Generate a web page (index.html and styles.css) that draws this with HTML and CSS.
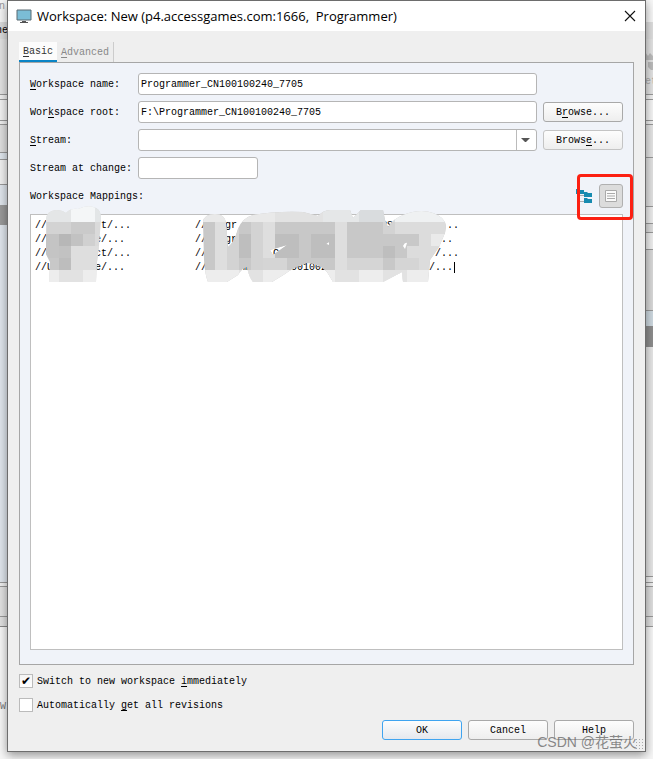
FILE: index.html
```
<!DOCTYPE html>
<html lang="en">
<head>
<meta charset="utf-8">
<title>Workspace: New</title>
<link rel="stylesheet" href="styles.css">
</head>
<body>
<div class="desktop">
  <div class="behind" aria-hidden="true">
    <div class="strip strip-left"><span class="peek peek-title">n:</span><span class="peek peek-menu">ne</span><span class="peek peek-log">W</span></div>
    <div class="strip strip-right">
      <svg class="peek-tool" width="8" height="20" viewBox="0 0 8 20"><path d="M0 0l3 4 2-3 3 3v4H0zM3 10h5v8H6l-3-3z" fill="#bbb"/></svg>
      <span class="peek peek-get">et</span>
    </div>
  </div>

  <main class="window">
    <header class="titlebar">
      <svg class="monitor" width="16" height="15" viewBox="0 0 16 15"><path d="M1 1h14v10H1z" fill="#7bbdd6" stroke="#5b6a72"/><path d="M6 12h4v1h2v1H4v-1h2z" fill="#555"/></svg>
      <h1>Workspace: New (p4.accessgames.com:1666,&nbsp; Programmer)</h1>
      <button class="close" type="button" aria-label="Close"><svg width="12" height="12" viewBox="0 0 12 12"><path d="M1 1l10 10M11 1L1 11" stroke="#111" stroke-width="1.1" fill="none"/></svg></button>
    </header>

    <form class="content">
      <nav class="tabs">
        <button class="tab active" type="button"><u>B</u>asic</button>
        <button class="tab" type="button"><u>A</u>dvanced</button>
      </nav>

      <section class="panel">
        <div class="fields">
          <label for="name"><u>W</u>orkspace name:</label>
          <input id="name" class="box" type="text" value="Programmer_CN100100240_7705">
          <span></span>
          <label for="root">Wor<u>k</u>space root:</label>
          <input id="root" class="box" type="text" value="F:\Programmer_CN100100240_7705">
          <button class="btn" type="button">B<u>r</u>owse...</button>
          <label for="stream"><u>S</u>tream:</label>
          <div class="combo">
            <select id="stream" class="box"><option></option></select>
            <svg class="arrow" width="20" height="20" viewBox="0 0 20 20"><path d="M.5 0v20" stroke="#bbb"/><path d="M5 8h9l-4 4H9z" fill="#555"/></svg>
          </div>
          <button class="btn light" type="button">Brows<u>e</u>...</button>
          <label for="change">Stream at change:</label>
          <input id="change" class="box short" type="text">
        </div>

        <div class="mapping-head">
          <label for="mappings">Workspace Mappings:</label>
          <div class="views">
            <button class="view" type="button" aria-label="Tree view"><svg width="16" height="16" viewBox="0 0 16 16"><path d="M3.500 5v8.500h5M3.500 7.500h5" fill="none" stroke="#a8adb0"/><path d="M0 1h3l1 1h4v4H0zM8 4h3l1 1h4v4H8zM8 10h3l1 1h4v4H8z" fill="#178bb0"/></svg></button>
            <button class="view pressed" type="button" aria-label="Text view"><svg width="14" height="14" viewBox="0 0 14 14"><path d="M1.500 1.500h11v11h-11z" fill="#fafafa" stroke="#aaa"/><path d="M3 4.500h8M3 7h8M3 9.500h8" stroke="#aaa"/></svg></button>
            <span class="highlight"></span>
          </div>
        </div>

        <div class="mappings">
          <textarea id="mappings" spellcheck="false">
//         t/...	//Progr                        PS       /...
//        e/...	//Progr                                /...
//        ct/...	//           C                          /...
//U       e/...	//      m       001002                 /...</textarea>
          <svg class="redaction" width="440" height="80" viewBox="30 206 440 80" aria-hidden="true">
            <defs>
              <clipPath id="blobA"><path d="M46 220Q46 211 56 210Q62 210 66 213Q71 208 78 209Q88 204 96 208Q101 210 101 219L99 246L97 262L96 282H49L50 262L46 254Z"/></clipPath>
              <clipPath id="blobB"><path clip-rule="evenodd" d="M203 222Q204 214 215 214Q225 214 226 223L228 247Q234 243 238 229Q242 218 253 215Q275 211 303 212L318 216Q324 209 332 210H350L353 218L361 210H383L385 220L388 227Q393 219 403 215Q420 208 433 213Q445 217 446 226L445 233L439 247L430 260L428 282H403L402 272L383 282H333L327 272Q320 264 307 263Q294 267 285 274L272 282H253Q249 277 247 267Q242 268 238 275L227 282H208Q205 275 204 260ZM270 250L287 245L273 255ZM326 244l3-2v3ZM403 246q2-4 4-3l-2 6Z"/></clipPath>
            </defs>
            <g clip-path="url(#blobA)" shape-rendering="crispEdges">
              <path fill="#dadada" d="M35 198h84v96H35z"/>
              <path fill="#e4e6e7" d="M35 198h36v24H35z"/><path fill="#f4f6f7" d="M71 198h24v24H71z"/><path fill="#e3e6e7" d="M95 198h12v24H95z"/>
              <path fill="#d3d3d3" d="M47 222h12v12H47zM59 222h12v12H59z"/><path fill="#cacaca" d="M71 222h24v12H71z"/>
              <path fill="#c4c4c4" d="M35 234h24v24H35z"/><path fill="#b7b7b7" d="M59 234h12v12H59z"/><path fill="#c2c2c2" d="M71 234h12v12H71zM59 246h12v12H59z"/><path fill="#d0d0d0" d="M83 234h12v12H83z"/>
              <path fill="#c8c8c8" d="M35 258h24v12H35z"/><path fill="#bdbdbd" d="M59 258h12v12H59z"/><path fill="#dedede" d="M71 246h36v24H71z"/>
              <path fill="#ededed" d="M35 270h24v14H35zM83 270h24v14H83z"/><path fill="#e2e2e2" d="M59 270h24v14H59z"/>
            </g>
            <g clip-path="url(#blobB)" shape-rendering="crispEdges">
              <path fill="#c8c8c8" d="M190 200h260v90H190z"/>
              <path fill="#e9e9e9" d="M190 200h85v22h-85z"/><path fill="#e2e2e2" d="M275 200h48v22h-48z"/><path fill="#e5e7e8" d="M323 200h36v22h-36z"/><path fill="#d9dcde" d="M359 200h36v22h-36z"/><path fill="#eff1f2" d="M395 200h60v22h-60z"/>
              <path fill="#dedede" d="M215 222h12v48h-12zM263 222h12v36h-12zM335 222h12v48h-12z"/>
              <path fill="#d3d3d3" d="M227 222h12v48h-12zM251 222h12v48h-12zM383 222h12v12h-12z"/>
              <path fill="#bebebe" d="M275 234h24v24h-24zM311 234h24v24h-24zM383 246h12v12h-12zM239 234h12v24h-12z"/>
              <path fill="#dcdcdc" d="M395 222h60v12h-60zM419 234h12v36h-12zM407 246h48v24h-48z"/><path fill="#eaeaea" d="M431 234h24v12h-24z"/>
              <path fill="#d5d5d5" d="M263 258h24v12h-24zM347 258h36v12h-36zM395 258h24v12h-24z"/>
              <path fill="#ededed" d="M190 270h265v14H190z"/><path fill="#e2e2e2" d="M239 270h24v14h-24zM335 270h24v14h-24zM383 270h24v14h-24z"/>
            </g>
            <path d="M454.500 262v11" stroke="#000" shape-rendering="crispEdges"/>
          </svg>
        </div>
      </section>

      <div class="options">
        <label class="check"><input type="checkbox" checked><span>Switch to new workspace <u>i</u>mmediately</span></label>
        <label class="check"><input type="checkbox"><span>Automatically <u>g</u>et all revisions</span></label>
      </div>

      <footer class="actions">
        <button class="btn primary" type="button">OK</button>
        <button class="btn" type="button">Cancel</button>
        <button class="btn" type="button">Help</button>
      </footer>
      <span class="grip"></span>
      <span class="watermark">CSDN @花萤火</span>
    </form>
  </main>
</div>
</body>
</html>
```
FILE: styles.css
```
* { box-sizing: border-box; }

body {
  margin: 0;
  font: 10px/14px "Liberation Mono", monospace;
  color: #000;
  background: #f4f4f4;
}

button, input, select, textarea { font: inherit; color: inherit; margin: 0; }
u { text-underline-offset: 2px; }

.desktop { display: grid; min-height: 100vh; }
.behind, .window { grid-area: 1 / 1; }

/* Edges of the application that stays behind the dialog */
.behind { display: flex; justify-content: space-between; overflow: hidden; }
.strip { position: relative; width: 12px; }
.strip-left {
  background: linear-gradient(#f4f4f4 22px, #dadada 22px 39px, #e2e2e2 39px 94px, #999 94px 95px,
    #eee 95px 99px, #999 99px 100px, #f2f2f2 100px 120px, #999 120px 121px, #eee 121px 124px,
    #999 124px 125px, #dedede 125px 152px, #999 152px 153px, #dfe6ed 153px 159px, #999 159px 160px,
    #f0f0f0 160px 184px, #999 184px 185px, #dfe5ec 185px 205px, #999 205px 225px, #dfe5ec 225px 582px,
    #999 582px 583px, #eee 583px 586px, #999 586px 587px, #e2e2e2 587px 616px, #999 616px 617px,
    #e0e0e0 617px 626px, #888 626px 627px, #f6f6f6 627px);
}
.strip-right {
  background: linear-gradient(#f6f6f6 22px, #ddd 22px 39px, #e2e2e2 39px 94px, #999 94px 95px,
    #eee 95px 99px, #999 99px 100px, #f4f4f4 100px 120px, #999 120px 121px, #eee 121px 124px,
    #999 124px 125px, #e4e4e4 125px 157px, #999 157px 158px, #e2e2e2 158px 206px, #999 206px 207px,
    #ececec 207px 223px, #999 223px 224px, #ddd 224px 232px, #999 232px 233px, #eee 233px 249px,
    #999 249px 250px, #d9d9d9 250px 310px, #999 310px 311px, #cdd8df 311px 326px, #8d8d8d 326px 347px,
    #e6e6e6 347px 576px, #999 576px 577px, #eee 577px 582px, #999 582px 583px, #eee 583px 586px,
    #999 586px 587px, #dedede 587px 616px, #999 616px 617px, #e0e0e0 617px 626px, #999 626px 627px, #f6f6f6 627px);
}
.peek { position: absolute; left: 0; }
.peek-title { top: 0; left: -1px; color: #999; }
.peek-menu { top: 24px; left: -4px; }
.peek-log { top: 700px; color: #777; }
.peek-tool { position: absolute; top: 52px; left: 4px; }
.peek-get { top: 75px; left: 4px; color: #aaa; }

.window {
  position: relative;
  display: flex;
  flex-direction: column;
  margin: 0 7px 7px;
  border: 1px solid #6d6d6d;
  background: #efefef;
  box-shadow: 0 3px 9px rgba(0, 0, 0, .4);
}

.titlebar {
  display: flex;
  align-items: center;
  gap: 5px;
  height: 30px;
  padding: 0 9px 0 8px;
  background: #fff;
}
.titlebar h1 {
  flex: 1;
  margin: 0;
  font: 13px/20px "Open Sans", sans-serif;
  white-space: nowrap;
}
.close { display: flex; padding: 0; border: 0; background: none; }

.content {
  flex: 1;
  display: flex;
  flex-direction: column;
  padding: 11px 11px;
}

.tabs { display: flex; }
.tab {
  height: 20px;
  padding: 2px 4px 0;
  border: 0;
  border-right: 1px solid #ccc;
  background: #ededed;
  color: #888;
}
.tab.active {
  background: #fcfcfc;
  color: #333;
  border-right: 0;
  border-bottom: 2px solid #0a84c6;
}

.panel {
  flex: 1;
  display: flex;
  flex-direction: column;
  padding: 10px 10px 14px;
  border: 1px solid #a6a6a6;
  background: #f0f3f9;
}
.fields {
  display: grid;
  grid-template-columns: 102px 1fr 80px;
  gap: 6px;
  align-items: center;
}
label { white-space: nowrap; }
.fields label { padding-top: 2px; }
.box {
  width: 100%;
  height: 22px;
  padding: 0 2px;
  border: 1px solid #b5b5b5;
  border-radius: 3px;
  background: #fff;
}
.box.short { width: 120px; }
.combo { position: relative; display: flex; }
.combo .box { appearance: none; }
.arrow { position: absolute; right: 1px; top: 1px; pointer-events: none; }

.btn {
  width: 80px;
  height: 20px;
  padding: 2px 0 0;
  border: 1px solid #a9a9a9;
  border-radius: 3px;
  background: linear-gradient(#fdfdfd, #eee);
}
.btn.light { border-color: #c4c4c4; }
.btn.primary { border-color: #3fa4f0; background: linear-gradient(#fdfdfd, #e4e8ee); }

.mapping-head {
  display: flex;
  justify-content: space-between;
  align-items: center;
  padding: 5px 0 6px;
}
.mapping-head label { padding-top: 2px; }
.views { position: relative; display: flex; gap: 3px; }
.view {
  display: flex;
  align-items: center;
  justify-content: center;
  width: 24px;
  height: 24px;
  padding: 0;
  border: 0;
  background: none;
}
.view.pressed { border: 1px solid #b0b0b0; border-radius: 3px; background: #dcdcdc; }
.highlight {
  position: absolute;
  top: -10px;
  right: -10px;
  width: 56px;
  height: 46px;
  border: 3px solid #fc2012;
  border-radius: 4px;
  pointer-events: none;
  z-index: 2;
}

.mappings { position: relative; flex: 1; display: flex; }
.mappings textarea {
  flex: 1;
  padding: 4px;
  border: 1px solid #bfbfbf;
  border-radius: 0;
  background: #fff;
  resize: none;
  white-space: pre;
  overflow: hidden;
  tab-size: 80px;
}
.redaction { position: absolute; left: 0; top: -8px; pointer-events: none; }

.options { display: grid; gap: 8px; padding: 8px 0 7px; }
.check { display: flex; align-items: center; gap: 4px; }
.check span { padding-top: 2px; }
.check input {
  appearance: none;
  width: 14px;
  height: 14px;
  border: 1px solid #bbb;
  background: #fff;
}
.check input:checked {
  background: #fff linear-gradient(#f4f4f4, #fff);
  display: grid;
  place-items: center;
}
.check input:checked::before {
  content: "✔";
  font: 12px/12px "DejaVu Sans", sans-serif;
}

.actions { display: flex; justify-content: flex-end; gap: 6px; }
.grip {
  position: absolute;
  right: 1px;
  bottom: 1px;
  width: 9px;
  height: 12px;
  background: radial-gradient(circle, #aaa 1px, transparent 1px) 0 0 / 3px 3px;
}
.watermark {
  position: absolute;
  right: 8px;
  bottom: 0;
  font: 14px/18px "Liberation Sans", "Noto Sans CJK SC", sans-serif;
  color: rgba(100, 100, 100, .75);
}
```
